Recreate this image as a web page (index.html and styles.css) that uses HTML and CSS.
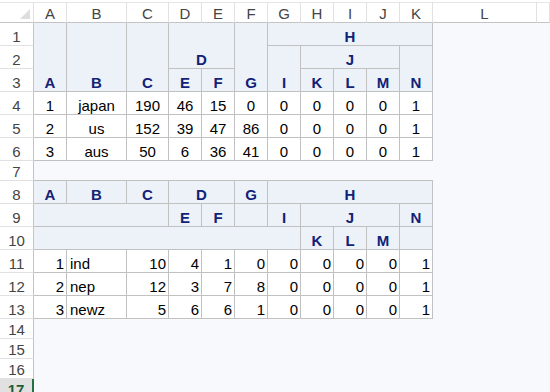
FILE: index.html
```html
<!DOCTYPE html>
<html>
<head>
<meta charset="utf-8">
<link rel="stylesheet" href="styles.css">
</head>
<body>
<div class="sheet">
  <div class="ch corner"><svg width="10" height="10" viewBox="0 0 10 10"><polygon points="10,0 10,10 0,10" fill="#dedede"/></svg></div>
  <div class="ch">A</div><div class="ch">B</div><div class="ch">C</div><div class="ch">D</div><div class="ch">E</div><div class="ch">F</div><div class="ch">G</div><div class="ch">H</div><div class="ch">I</div><div class="ch">J</div><div class="ch">K</div><div class="ch">L</div><div class="ch"></div>

  <div class="rh">1</div>
  <div class="hd r3">A</div><div class="hd r3">B</div><div class="hd r3">C</div><div class="hd c2 r2">D</div><div class="hd r3">G</div><div class="hd c5">H</div><div class="bl"></div><div class="bl"></div>
  <div class="rh">2</div>
  <div class="hd r2">I</div><div class="hd c3">J</div><div class="hd r2">N</div><div class="bl"></div><div class="bl"></div>
  <div class="rh">3</div>
  <div class="hd">E</div><div class="hd">F</div><div class="hd">K</div><div class="hd">L</div><div class="hd">M</div><div class="bl"></div><div class="bl"></div>

  <div class="rh">4</div>
  <div class="d">1</div><div class="d">japan</div><div class="d">190</div><div class="d">46</div><div class="d">15</div><div class="d">0</div><div class="d">0</div><div class="d">0</div><div class="d">0</div><div class="d">0</div><div class="d">1</div><div class="bl"></div><div class="bl"></div>
  <div class="rh">5</div>
  <div class="d">2</div><div class="d">us</div><div class="d">152</div><div class="d">39</div><div class="d">47</div><div class="d">86</div><div class="d">0</div><div class="d">0</div><div class="d">0</div><div class="d">0</div><div class="d">1</div><div class="bl"></div><div class="bl"></div>
  <div class="rh">6</div>
  <div class="d">3</div><div class="d">aus</div><div class="d">50</div><div class="d">6</div><div class="d">36</div><div class="d">41</div><div class="d">0</div><div class="d">0</div><div class="d">0</div><div class="d">0</div><div class="d">1</div><div class="bl"></div><div class="bl"></div>

  <div class="rh">7</div>
  <div class="gap c11"></div><div class="bl c2"></div>

  <div class="rh">8</div>
  <div class="hd">A</div><div class="hd">B</div><div class="hd">C</div><div class="hd c2">D</div><div class="hd">G</div><div class="hd c5">H</div><div class="bl"></div><div class="bl"></div>
  <div class="rh">9</div>
  <div class="hd c3"></div><div class="hd">E</div><div class="hd">F</div><div class="hd"></div><div class="hd">I</div><div class="hd c3">J</div><div class="hd">N</div><div class="bl"></div><div class="bl"></div>
  <div class="rh">10</div>
  <div class="hd c7"></div><div class="hd">K</div><div class="hd">L</div><div class="hd">M</div><div class="hd"></div><div class="bl"></div><div class="bl"></div>

  <div class="rh">11</div>
  <div class="d r">1</div><div class="d l">ind</div><div class="d r">10</div><div class="d r">4</div><div class="d r">1</div><div class="d r">0</div><div class="d r">0</div><div class="d r">0</div><div class="d r">0</div><div class="d r">0</div><div class="d r">1</div><div class="bl"></div><div class="bl"></div>
  <div class="rh">12</div>
  <div class="d r">2</div><div class="d l">nep</div><div class="d r">12</div><div class="d r">3</div><div class="d r">7</div><div class="d r">8</div><div class="d r">0</div><div class="d r">0</div><div class="d r">0</div><div class="d r">0</div><div class="d r">1</div><div class="bl"></div><div class="bl"></div>
  <div class="rh">13</div>
  <div class="d r">3</div><div class="d l">newz</div><div class="d r">5</div><div class="d r">6</div><div class="d r">6</div><div class="d r">1</div><div class="d r">0</div><div class="d r">0</div><div class="d r">0</div><div class="d r">0</div><div class="d r">1</div><div class="bl"></div><div class="bl"></div>

  <div class="rh">14</div><div class="bl c13"></div>
  <div class="rh">15</div><div class="bl c13"></div>
  <div class="rh">16</div><div class="bl c13"></div>
  <div class="rh sel">17</div><div class="bl c13"></div>
</div>
</body>
</html>
```

FILE: styles.css
```css
* { box-sizing: border-box; }
html, body { margin: 0; background: #ffffff; }
body {
  font-family: "Liberation Sans", Arial, sans-serif;
  font-size: 15px;
  line-height: 17px;
  overflow: hidden;
}
.sheet {
  display: grid;
  grid-template-columns: 34px 33px 60px 42px repeat(8, 33px) 104px 1fr;
  grid-template-rows: 21px repeat(6, 23px) 20px repeat(6, 23px) repeat(4, 20px);
  padding-top: 2px;
  width: 550px;
  height: 392px;
  overflow: hidden;
}
.sheet > div {
  display: flex;
  align-items: flex-end;
  justify-content: center;
  white-space: nowrap;
  overflow: hidden;
}
.ch {
  background: #ffffff;
  border-top: 1px solid #e6e6e6;
  border-right: 1px solid #e1e1e1;
  border-bottom: 1px solid #c4c4c4;
  color: #444444;
}
.sheet > .corner {
  justify-content: flex-end;
  padding: 0 3px 3px 0;
}
.rh {
  background: #ffffff;
  border-right: 1px solid #c4c4c4;
  border-bottom: 1px solid #e1e1e1;
  color: #444444;
}
.rh.sel {
  background: #e1e1e1;
  border-right: 2px solid #217346;
  color: #1b5e38;
  font-weight: bold;
}
.hd {
  background: #edf2f9;
  border-right: 1px solid #c1c1c1;
  border-bottom: 1px solid #c1c1c1;
  color: #112277;
  font-weight: bold;
}
.d {
  background: #ffffff;
  border-right: 1px solid #c1c1c1;
  border-bottom: 1px solid #c1c1c1;
  color: #000000;
}
.sheet > .d.r { justify-content: flex-end; padding-right: 2px; }
.sheet > .d.l { justify-content: flex-start; padding-left: 3px; }
.bl { background: #f8f9fd; }
.gap { background: #f8f9fd; border-bottom: 1px solid #c1c1c1; }
.c2 { grid-column: span 2; }
.c3 { grid-column: span 3; }
.c5 { grid-column: span 5; }
.c7 { grid-column: span 7; }
.c11 { grid-column: span 11; }
.c13 { grid-column: span 13; }
.r2 { grid-row: span 2; }
.r3 { grid-row: span 3; }
```
